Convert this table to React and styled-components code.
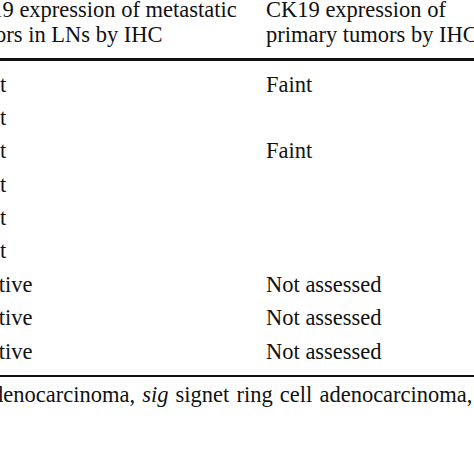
import styled, { createGlobalStyle } from 'styled-components';

const GlobalStyle = createGlobalStyle`
  html, body {
    margin: 0;
    padding: 0;
    background: #fff;
    overflow: hidden;
  }
  body {
    font-family: "Liberation Serif", "Times New Roman", serif;
    color: #111;
  }
`;

const Table = styled.div`
  width: 640px;
  margin-left: -40px;
  font-size: 22.5px;
`;

const HeadRow = styled.div`
  display: grid;
  grid-template-columns: 306px 1fr;
  margin-top: -2px;
  padding-bottom: 11px;
  line-height: 24.5px;
  white-space: nowrap;
`;

const Rule = styled.div`
  height: 2.5px;
  background: #111;
`;

const Body = styled.div`
  padding: 7px 0 6.5px;
`;

const Row = styled.div`
  display: grid;
  grid-template-columns: 306px 1fr;
  height: 33.4px;
  line-height: 33.4px;
  white-space: nowrap;
`;

const Cell = styled.div`
  min-height: 1px;
`;

const Footnote = styled.div`
  padding-left: 22px;
  margin-top: 6px;
  line-height: 24.5px;
  word-spacing: 1.5px;
  white-space: nowrap;

  i {
    font-style: italic;
  }
`;

const rows = [
  { lns: 'Faint', primary: 'Faint' },
  { lns: 'Faint', primary: '' },
  { lns: 'Faint', primary: 'Faint' },
  { lns: 'Faint', primary: '' },
  { lns: 'Faint', primary: '' },
  { lns: 'Faint', primary: '' },
  { lns: 'Positive', primary: 'Not assessed' },
  { lns: 'Positive', primary: 'Not assessed' },
  { lns: 'Positive', primary: 'Not assessed' },
];

export default function App() {
  return (
    <>
      <GlobalStyle />
      <Table>
        <HeadRow>
          <Cell>
            CK19 expression of metastatic
            <br />
            tumors in LNs by IHC
          </Cell>
          <Cell>
            CK19 expression of
            <br />
            primary tumors by IHC
          </Cell>
        </HeadRow>
        <Rule />
        <Body>
          {rows.map((row, i) => (
            <Row key={i}>
              <Cell>{row.lns}</Cell>
              <Cell>{row.primary}</Cell>
            </Row>
          ))}
        </Body>
        <Rule />
        <Footnote>
          adenocarcinoma, <i>sig</i> signet ring cell adenocarcinoma,{' '}
          <i>muc</i> mucinous adenocarcinoma
        </Footnote>
      </Table>
    </>
  );
}
